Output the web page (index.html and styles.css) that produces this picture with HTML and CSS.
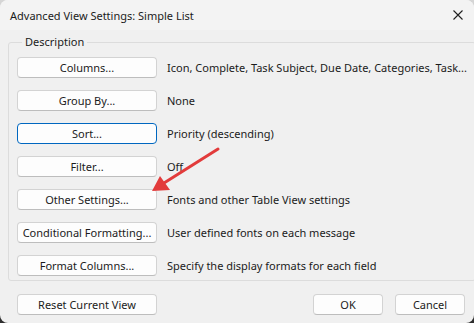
FILE: index.html
```html
<!DOCTYPE html>
<html lang="en">
<head>
    <meta charset="UTF-8" />
    <meta name="viewport" content="width=device-width, initial-scale=1.0" />
    <title>Advanced View Settings</title>
    <link rel="stylesheet" href="styles.css">
</head>
<body>
    <div class="window">
        <div class="titlebar">
            <span class="title">Advanced View Settings: Simple List</span>
            <svg class="close" width="10" height="10" viewBox="0 0 10 10">
                <path d="M0.5 0.5 L9.5 9.5 M9.5 0.5 L0.5 9.5" stroke="#1f1f1f" stroke-width="1.1" />
            </svg>
        </div>

        <fieldset class="group">
            <legend>Description</legend>
            <div class="row">
                <button class="button">Columns...</button>
                <span class="desc">Icon, Complete, Task Subject, Due Date, Categories, Task...</span>
            </div>
            <div class="row">
                <button class="button">Group By...</button>
                <span class="desc">None</span>
            </div>
            <div class="row">
                <button class="button focused">Sort...</button>
                <span class="desc">Priority (descending)</span>
            </div>
            <div class="row">
                <button class="button">Filter...</button>
                <span class="desc">Off</span>
            </div>
            <div class="row">
                <button class="button">Other Settings...</button>
                <span class="desc">Fonts and other Table View settings</span>
            </div>
            <div class="row">
                <button class="button">Conditional Formatting...</button>
                <span class="desc">User defined fonts on each message</span>
            </div>
            <div class="row">
                <button class="button">Format Columns...</button>
                <span class="desc">Specify the display formats for each field</span>
            </div>
        </fieldset>

        <div class="footer">
            <button class="button">Reset Current View</button>
            <div class="actions">
                <button class="button small">OK</button>
                <button class="button small">Cancel</button>
            </div>
        </div>

        <!-- annotation arrow pointing at Other Settings -->
        <svg class="arrow" width="474" height="323" viewBox="0 0 474 323">
            <line x1="218" y1="149" x2="164" y2="183" stroke="#e23b3b" stroke-width="3" stroke-linecap="round" />
            <polygon points="152,191 160,176 170,190" fill="#e23b3b" />
        </svg>
    </div>
</body>
</html>
```

FILE: styles.css
```css
* {
    margin: 0;
    padding: 0;
    box-sizing: border-box;
    font-family: 'Noto Sans', 'Open Sans', sans-serif;
}

body {
    width: 474px;
    height: 323px;
    overflow: hidden;
    background: linear-gradient(#d6d6d6, #2e2e2e);
}

.window {
    position: relative;
    width: 474px;
    height: 323px;
    background: #f0f0f0;
    border-radius: 8px;
    color: #1b1b1b;
    font-size: 11px;
}

.titlebar {
    height: 30px;
    display: flex;
    align-items: center;
    justify-content: space-between;
    padding: 0 11px 0 10px;
    background: #f3f3f3;
    border-radius: 8px 8px 0 0;
}

.title {
    font-size: 11px;
}

.group {
    margin: 4px 7px 0 8px;
    border: 1px solid #dcdcdc;
    border-radius: 3px;
    padding: 7px 8px 4px 8px;
    display: flex;
    flex-direction: column;
    gap: 12px;
}

.group legend {
    margin-left: 5px;
    padding: 0 3px;
    line-height: 16px;
    font-size: 11px;
}

.row {
    display: flex;
    align-items: center;
    gap: 10px;
}

.button {
    width: 140px;
    height: 21px;
    background: #fdfdfd;
    border: 1px solid #d3d3d3;
    border-bottom-color: #bdbdbd;
    border-radius: 4px;
    font-size: 11px;
    color: #1b1b1b;
    white-space: nowrap;
}

.button.focused {
    border: 1px solid #0067c0;
}

.button.small {
    width: 70px;
}

.desc {
    white-space: nowrap;
}

.footer {
    display: flex;
    justify-content: space-between;
    align-items: center;
    margin-top: 13px;
    padding: 0 9px 0 17px;
}

.actions {
    display: flex;
    gap: 12px;
}

.arrow {
    position: absolute;
    left: 0;
    top: 0;
    pointer-events: none;
}
```
